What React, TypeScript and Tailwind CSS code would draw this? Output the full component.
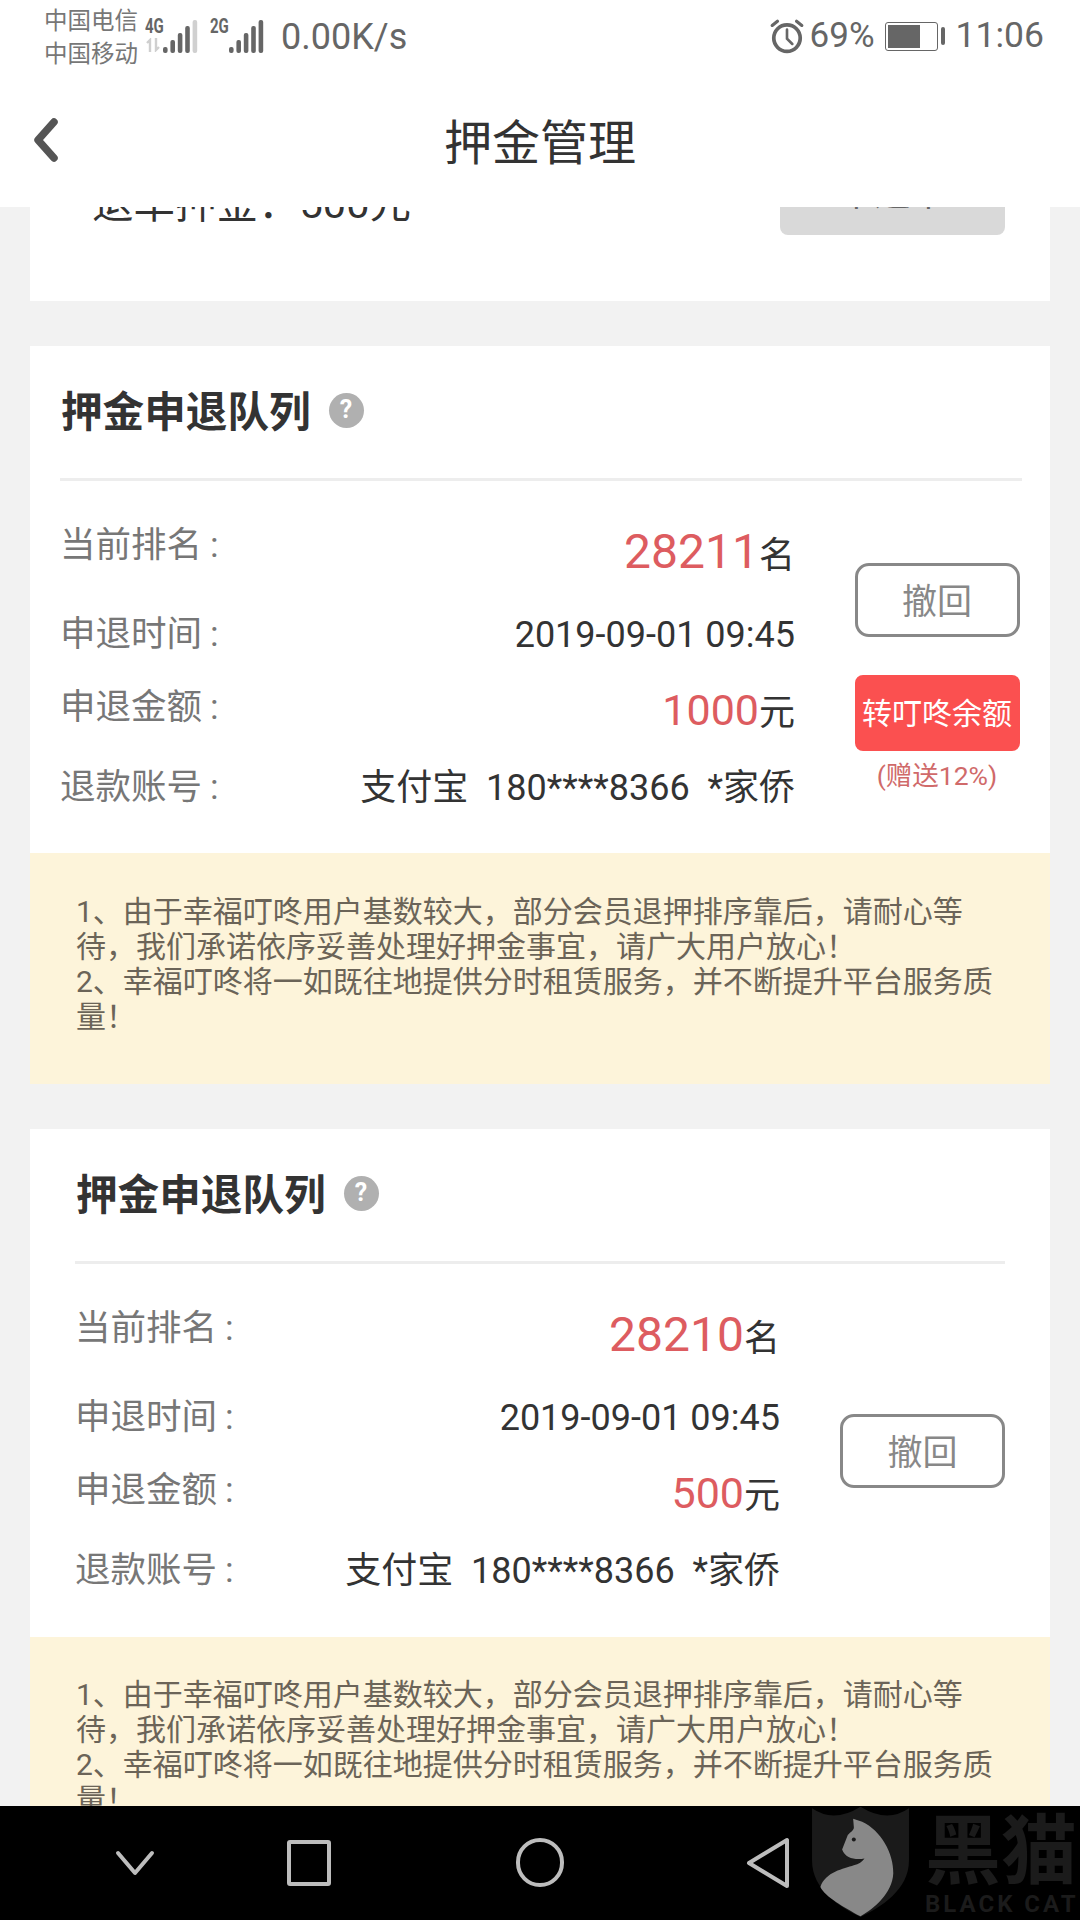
const FONT = "font-['Roboto','Noto_Sans_CJK_SC',sans-serif]"

function Bars({ faded }: { faded?: boolean }) {
  const heights = [6, 13, 20, 27, 33]
  return (
    <svg width="36" height="33" viewBox="0 0 36 33">
      {heights.map((h, i) => (
        <rect key={i} x={i * 7.4 + 1} y={33 - h} width="4.6" height={h} rx="2" fill={faded && i === 4 ? "#d0d0d0" : "#666"} />
      ))}
    </svg>
  )
}

function StatusBar() {
  return (
    <div className="h-[72px] flex items-center pl-[44px] pr-[36px] text-[#666]">
      <div className="flex flex-col text-[23.5px] leading-[33px] w-[101px] mt-[3px] text-[#777] whitespace-nowrap">
        <span>中国电信</span>
        <span>中国移动</span>
      </div>
      <div className="relative w-[60px] h-[40px]">
        <span className="absolute left-[0px] top-[0px] text-[20px] leading-[20px] font-bold origin-left scale-x-75">4G</span>
        <svg className="absolute left-[1px] top-[22px]" width="14" height="14" viewBox="0 0 14 14" fill="none" stroke="#cfcfcf" strokeWidth="2.4">
          <path d="M4 14V2L1 5M10 0v12l3-3" />
        </svg>
        <div className="absolute left-[17px] top-[4px]"><Bars faded /></div>
      </div>
      <div className="relative w-[65px] h-[40px] ml-[5px]">
        <span className="absolute left-[0px] top-[0px] text-[20px] leading-[20px] font-bold origin-left scale-x-75">2G</span>
        <div className="absolute left-[18px] top-[4px]"><Bars /></div>
      </div>
      <span className="ml-[6px] text-[36px] mt-[1px]">0.00K/s</span>
      <div className="ml-auto flex items-center">
        <svg width="36" height="36" viewBox="0 0 34 34" fill="none" stroke="#666" strokeWidth="3.5" strokeLinecap="round">
          <circle cx="17" cy="19" r="12.5" />
          <path d="M17 11v8.5l5 5" strokeWidth="2.5" />
          <path d="M3 7l5-4M31 7l-5-4" strokeWidth="3" />
        </svg>
        <span className="ml-[5px] text-[35px]">69%</span>
        <div className="ml-[10px] flex items-center">
          <div className="w-[53px] h-[29px] rounded-[3px] border-[1.5px] border-[#666] p-[2px]">
            <div className="w-[32px] h-full bg-[#666]" />
          </div>
          <div className="w-[4px] h-[18px] rounded-[2px] bg-[#666] ml-[3px]" />
        </div>
        <span className="ml-[11px] text-[35.5px]">11:06</span>
      </div>
    </div>
  )
}

function Header() {
  return (
    <div className="relative z-10 h-[135px] bg-white flex items-center justify-center">
      <svg className="absolute left-[33px] top-[46px]" width="26" height="44" viewBox="0 0 26 44" fill="none" stroke="#555" strokeWidth="7.5" strokeLinecap="round" strokeLinejoin="round">
        <path d="M21 4L5 22l16 18" />
      </svg>
      <span className="text-[48px] text-[#333] mt-[8px]">押金管理</span>
    </div>
  )
}

type RowProps = { label: string; children: React.ReactNode; className: string }

function Row({ label, children, className }: RowProps) {
  return (
    <div className={`flex justify-between items-center h-[60px] ${className}`}>
      <span className="text-[35.5px] text-[#777] whitespace-nowrap">
        {label}
        <span className="ml-[8px]">:</span>
      </span>
      <span className="text-[36px] text-[#333] whitespace-nowrap">{children}</span>
    </div>
  )
}

type QueueProps = {
  rank: string
  amount: string
  indent: string
  rows: string
  side: string
  note: string
  children: React.ReactNode
}

function Queue({ rank, amount, indent, rows, side, note, children }: QueueProps) {
  return (
    <div className="mx-[30px] bg-white">
      <div className={indent}>
        <div className="flex items-center h-[135px] border-b-[3px] border-[#ededed]">
          <span className="text-[41.6px] font-bold text-[#333] ml-[1px] mt-[2px]">押金申退队列</span>
          <span className="ml-[18px] mt-[-4px] w-[35px] h-[35px] rounded-full bg-[#b0b0b0] text-white text-[25px] font-bold flex items-center justify-center">?</span>
        </div>
      </div>
      <div className={`flex ${side}`}>
        <div className={`flex flex-col ${rows}`}>
          <Row label="当前排名" className="mt-[35px]">
            <span className="text-[48px] text-[#dd5c60] relative top-[6px]">{rank}</span>
            <span className="relative top-[6px]">名</span>
          </Row>
          <Row label="申退时间" className="mt-[29px]">2019-09-01 09:45</Row>
          <Row label="申退金额" className="mt-[13px]">
            <span className="relative top-[2px]">
              <span className="text-[43px] text-[#dd5c60]">{amount}</span>元
            </span>
          </Row>
          <Row label="退款账号" className="mt-[20px]">支付宝&nbsp;&nbsp;180****8366&nbsp;&nbsp;*家侨</Row>
        </div>
        {children}
      </div>
      <div className={`bg-[#fdf4da] text-[30px] leading-[35px] text-[#6b6458] pl-[46px] whitespace-nowrap ${note}`}>
        <div>1、由于幸福叮咚用户基数较大，部分会员退押排序靠后，请耐心等</div>
        <div>待，我们承诺依序妥善处理好押金事宜，请广大用户放心！</div>
        <div>2、幸福叮咚将一如既往地提供分时租赁服务，并不断提升平台服务质</div>
        <div>量！</div>
      </div>
    </div>
  )
}

function NavBar() {
  return (
    <div className="relative h-[114px] bg-black shrink-0">
      <svg className="absolute left-[113px] top-[43px]" width="44" height="30" viewBox="0 0 44 30" fill="none" stroke="#bdbdbd" strokeWidth="4" strokeLinecap="round" strokeLinejoin="round">
        <path d="M5 4l17 20L39 4" />
      </svg>
      <div className="absolute left-[287px] top-[34px] w-[44px] h-[46px] rounded-[3px] border-[4px] border-[#bdbdbd]" />
      <div className="absolute left-[516px] top-[32px] w-[48px] h-[49px] rounded-full border-[4px] border-[#bdbdbd]" />
      <svg className="absolute left-[745px] top-[30px]" width="48" height="54" viewBox="0 0 48 54" fill="none" stroke="#bdbdbd" strokeWidth="4" strokeLinejoin="round">
        <path d="M42 4v46L4 27z" />
      </svg>
      <svg className="absolute left-[812px] top-[0px]" width="97" height="112" viewBox="125 48 290 335">
        <path d="M125 55Q190 100 270 50 350 100 415 55V210C415 300 330 350 270 380 210 350 125 300 125 210Z" fill="#1a1a1a" />
        <path d="M248 86L275 95C330 120 370 190 368 250 365 310 310 355 270 378 220 350 165 320 150 290 165 245 220 235 250 225 265 222 275 215 282 205 255 210 225 205 215 178L232 135C240 125 252 120 250 110Z" fill="#888" />
        <circle cx="250" cy="148" r="6" fill="#1a1a1a" />
      </svg>
      <div className="absolute left-[925px] top-[8px] flex flex-col items-start text-[#1b1b1b] font-bold whitespace-nowrap">
        <span className="text-[76px] leading-[76px]">黑猫</span>
        <span className="text-[24px] leading-[26px] tracking-[3px] mt-[1px]">BLACK CAT</span>
      </div>
    </div>
  )
}

export default function App() {
  return (
    <div className={`w-[1080px] h-[1920px] flex flex-col overflow-hidden bg-[#f2f2f2] ${FONT}`}>
      <div className="bg-white">
        <StatusBar />
        <Header />
      </div>
      <div className="flex-1 overflow-hidden">
        <div className="mx-[30px] mt-[-60px] h-[154px] bg-white flex justify-between pl-[62px] pr-[45px]">
          <span className="text-[41.5px] text-[#333] h-[70px] leading-[70px] mt-[22px] whitespace-nowrap">退单押金：500元</span>
          <span className="w-[225px] h-[88px] pt-[6px] rounded-[8px] bg-[#d9d9d9] text-[#666] text-[36px] flex items-center justify-center">申退中</span>
        </div>
        <div className="h-[45px]" />
        <Queue rank="28211" amount="1000" indent="pl-[30px] pr-[28px]" rows="w-[765px] pl-[30px]" side="h-[372px]" note="h-[231px] pt-[41px]">
          <div className="ml-[60px] flex flex-col items-center w-[164px] pt-[82px]">
            <span className="w-[165px] h-[74px] pt-[6px] rounded-[14px] border-[3px] border-[#888] text-[#888] text-[35px] flex items-center justify-center">撤回</span>
            <span className="mt-[38px] w-[165px] h-[76px] rounded-[8px] bg-[#fb5050] text-white text-[30px] flex items-center justify-center whitespace-nowrap">转叮咚余额</span>
            <span className="mt-[5px] text-[26.5px] text-[#d06a6a] whitespace-nowrap">(赠送12%)</span>
          </div>
        </Queue>
        <div className="h-[45px]" />
        <Queue rank="28210" amount="500" indent="pl-[45px] pr-[45px]" rows="w-[750px] pl-[45px]" side="h-[373px]" note="h-[200px] pt-[40px]">
          <div className="ml-[60px] pt-[150px]">
            <span className="w-[165px] h-[74px] pt-[6px] rounded-[14px] border-[3px] border-[#888] text-[#888] text-[35px] flex items-center justify-center">撤回</span>
          </div>
        </Queue>
      </div>
      <NavBar />
    </div>
  )
}
